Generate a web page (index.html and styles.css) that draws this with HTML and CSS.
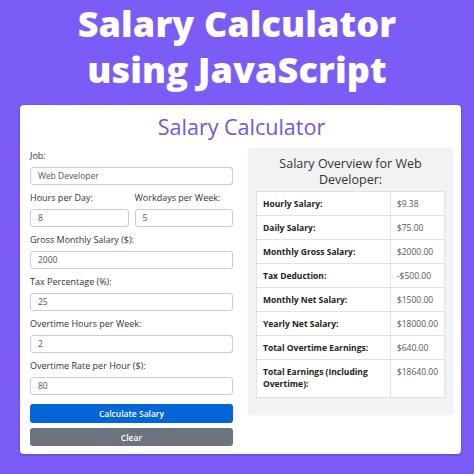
FILE: index.html
```html
<!DOCTYPE html>
<html>
<head>
<meta charset="utf-8">
<link rel="stylesheet" href="styles.css">
</head>
<body>
<h1 class="hero">Salary Calculator<br>using JavaScript</h1>
<div class="card">
  <h2 class="card-title">Salary Calculator</h2>
  <div class="cols">
    <div class="form">
      <div class="field">
        <label class="lbl">Job:</label>
        <div class="input">Web Developer</div>
      </div>
      <div class="row2">
        <div class="field">
          <label class="lbl">Hours per Day:</label>
          <div class="input">8</div>
        </div>
        <div class="field">
          <label class="lbl">Workdays per Week:</label>
          <div class="input">5</div>
        </div>
      </div>
      <div class="field">
        <label class="lbl">Gross Monthly Salary ($):</label>
        <div class="input">2000</div>
      </div>
      <div class="field">
        <label class="lbl">Tax Percentage (%):</label>
        <div class="input">25</div>
      </div>
      <div class="field">
        <label class="lbl">Overtime Hours per Week:</label>
        <div class="input">2</div>
      </div>
      <div class="field">
        <label class="lbl">Overtime Rate per Hour ($):</label>
        <div class="input">80</div>
      </div>
      <button class="btn btn-primary">Calculate Salary</button>
      <button class="btn btn-gray">Clear</button>
    </div>
    <div class="overview">
      <h3 class="ov-title">Salary Overview for Web<br>Developer:</h3>
      <table class="tbl">
        <tr><th>Hourly Salary:</th><td>$9.38</td></tr>
        <tr><th>Daily Salary:</th><td>$75.00</td></tr>
        <tr><th>Monthly Gross Salary:</th><td>$2000.00</td></tr>
        <tr><th>Tax Deduction:</th><td>-$500.00</td></tr>
        <tr><th>Monthly Net Salary:</th><td>$1500.00</td></tr>
        <tr><th>Yearly Net Salary:</th><td>$18000.00</td></tr>
        <tr><th>Total Overtime Earnings:</th><td>$640.00</td></tr>
        <tr><th>Total Earnings (Including<br>Overtime):</th><td>$18640.00</td></tr>
      </table>
    </div>
  </div>
</div>
</body>
</html>
```
FILE: styles.css
```css
* { box-sizing: border-box; }
html, body { margin: 0; padding: 0; }
body {
  width: 474px;
  height: 474px;
  overflow: hidden;
  background: #7b5cf7;
  font-family: "Open Sans", "DejaVu Sans", sans-serif;
  color: #333;
}
.hero {
  margin: 0;
  padding-top: 1px;
  text-align: center;
  color: #fff;
  font-weight: 800;
  font-size: 36px;
  line-height: 46px;
  letter-spacing: 0.1px;
}
.card {
  margin: 12px 13px 0 20px;
  height: 349px;
  background: #fff;
  border-radius: 4px;
  box-shadow: 0 1px 3px rgba(0,0,0,0.25);
  padding: 10px 8px 0 10px;
}
.card-title {
  margin: 0;
  text-align: center;
  color: #7156e0;
  font-weight: 400;
  font-size: 21.5px;
  line-height: 24px;
}
.cols {
  display: flex;
  gap: 15px;
  margin-top: 11px;
}
.form {
  width: 203px;
  display: flex;
  flex-direction: column;
}
.field {
  display: flex;
  flex-direction: column;
  margin-bottom: 7px;
  min-width: 0;
}
.row2 {
  display: flex;
  gap: 6px;
}
.row2 .field { flex: 1; }
.lbl {
  font-size: 9px;
  line-height: 12px;
  margin-bottom: 5px;
  color: #333;
}
.input {
  height: 18px;
  border: 1px solid #ccc;
  border-radius: 3px;
  padding: 0 7px;
  font-size: 8.5px;
  line-height: 16px;
  color: #555;
}
.btn {
  display: block;
  width: 100%;
  border: none;
  border-radius: 3px;
  color: #fff;
  font-family: inherit;
  font-weight: 600;
  font-size: 8.5px;
  height: 19px;
  padding: 0;
}
.btn-primary { background: #0466d6; margin-top: 2px; }
.btn-gray { background: #6c757d; margin-top: 5px; height: 18px; }
.overview {
  width: 205px;
  height: 266px;
  margin-top: -2px;
  background: #f2f2f2;
  border-radius: 4px;
  box-shadow: 0 1px 2px rgba(0,0,0,0.08);
  padding: 8px 8px 0;
}
.ov-title {
  margin: 0 0 3px;
  text-align: center;
  font-weight: 400;
  font-size: 12.5px;
  line-height: 16px;
  color: #333;
}
.tbl {
  width: 100%;
  border-collapse: collapse;
  background: #fff;
  font-size: 8.5px;
}
.tbl th, .tbl td {
  border: 1px solid #e2e2e2;
  padding: 6px 6px 5px 6px;
  line-height: 12px;
  text-align: left;
  vertical-align: top;
}
.tbl tr:last-child th, .tbl tr:last-child td { padding-bottom: 7px; }
.tbl th {
  width: 135px;
  font-weight: 700;
  color: #222;
}
.tbl td {
  color: #555;
  font-weight: 400;
}
```
